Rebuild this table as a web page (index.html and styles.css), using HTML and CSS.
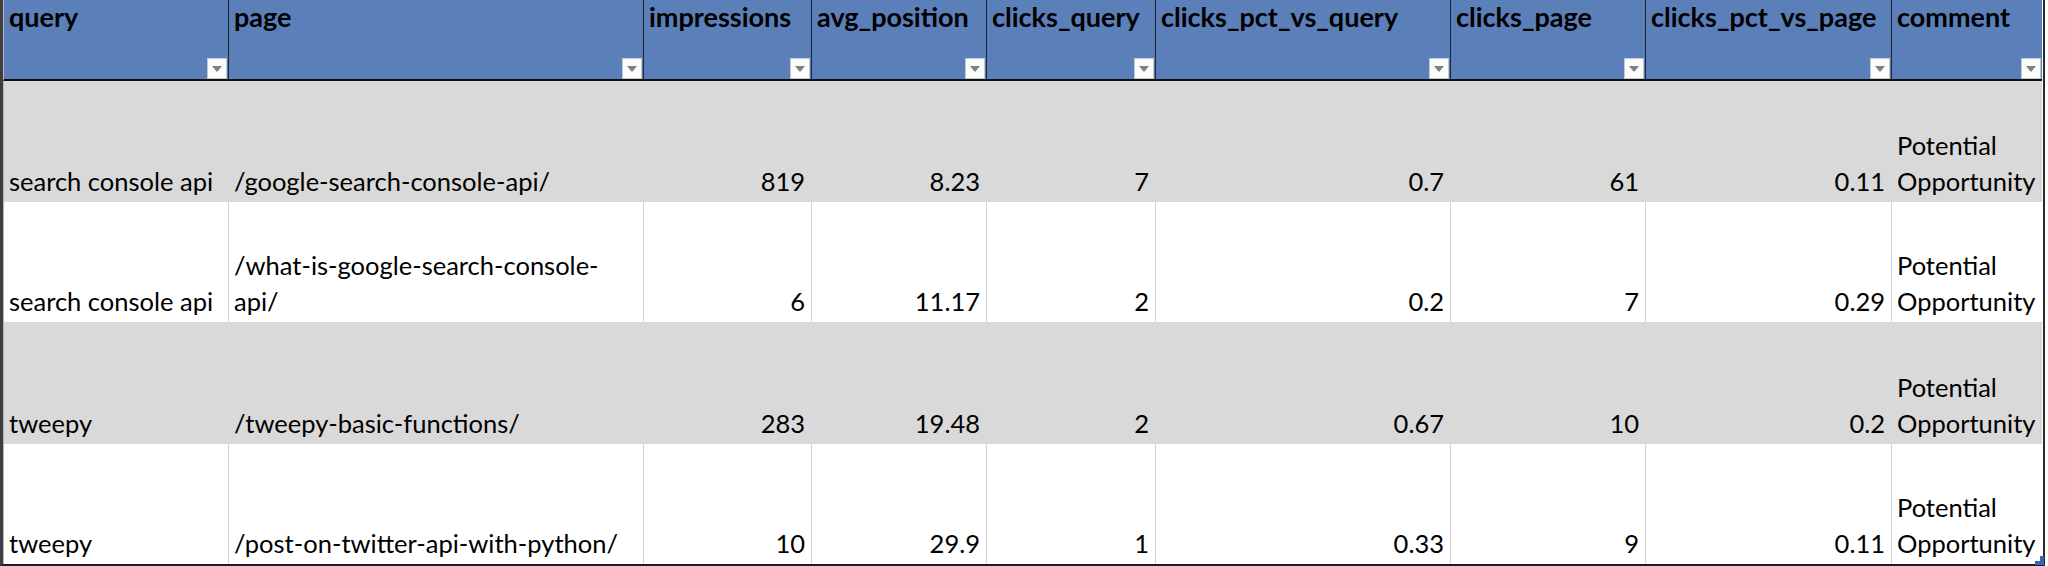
FILE: index.html
```html
<!DOCTYPE html>
<html lang="en">
<head>
<meta charset="utf-8">
<title>Query opportunities</title>
<link rel="stylesheet" href="styles.css">
</head>
<body>
<div class="sheet">
  <div class="grid">
    <div class="th first"><span class="label">query</span><span class="filter"><svg width="10" height="6" viewBox="0 0 10 6"><path d="M0 0H10L5 6Z"/></svg></span></div>
    <div class="th"><span class="label">page</span><span class="filter"><svg width="10" height="6" viewBox="0 0 10 6"><path d="M0 0H10L5 6Z"/></svg></span></div>
    <div class="th"><span class="label">impressions</span><span class="filter"><svg width="10" height="6" viewBox="0 0 10 6"><path d="M0 0H10L5 6Z"/></svg></span></div>
    <div class="th"><span class="label">avg_position</span><span class="filter"><svg width="10" height="6" viewBox="0 0 10 6"><path d="M0 0H10L5 6Z"/></svg></span></div>
    <div class="th"><span class="label">clicks_query</span><span class="filter"><svg width="10" height="6" viewBox="0 0 10 6"><path d="M0 0H10L5 6Z"/></svg></span></div>
    <div class="th"><span class="label">clicks_pct_vs_query</span><span class="filter"><svg width="10" height="6" viewBox="0 0 10 6"><path d="M0 0H10L5 6Z"/></svg></span></div>
    <div class="th"><span class="label">clicks_page</span><span class="filter"><svg width="10" height="6" viewBox="0 0 10 6"><path d="M0 0H10L5 6Z"/></svg></span></div>
    <div class="th"><span class="label">clicks_pct_vs_page</span><span class="filter"><svg width="10" height="6" viewBox="0 0 10 6"><path d="M0 0H10L5 6Z"/></svg></span></div>
    <div class="th last"><span class="label">comment</span><span class="filter"><svg width="10" height="6" viewBox="0 0 10 6"><path d="M0 0H10L5 6Z"/></svg></span></div>

    <div class="td shade first">search console api</div>
    <div class="td shade">/google-search-console-api/</div>
    <div class="td shade num">819</div>
    <div class="td shade num">8.23</div>
    <div class="td shade num">7</div>
    <div class="td shade num">0.7</div>
    <div class="td shade num">61</div>
    <div class="td shade num">0.11</div>
    <div class="td shade last">Potential Opportunity</div>

    <div class="td first">search console api</div>
    <div class="td">/what-is-google-search-console-<br>api/</div>
    <div class="td num">6</div>
    <div class="td num">11.17</div>
    <div class="td num">2</div>
    <div class="td num">0.2</div>
    <div class="td num">7</div>
    <div class="td num">0.29</div>
    <div class="td last">Potential Opportunity</div>

    <div class="td shade first">tweepy</div>
    <div class="td shade">/tweepy-basic-functions/</div>
    <div class="td shade num">283</div>
    <div class="td shade num">19.48</div>
    <div class="td shade num">2</div>
    <div class="td shade num">0.67</div>
    <div class="td shade num">10</div>
    <div class="td shade num">0.2</div>
    <div class="td shade last">Potential Opportunity</div>

    <div class="td first">tweepy</div>
    <div class="td">/post-on-twitter-api-with-python/</div>
    <div class="td num">10</div>
    <div class="td num">29.9</div>
    <div class="td num">1</div>
    <div class="td num">0.33</div>
    <div class="td num">9</div>
    <div class="td num">0.11</div>
    <div class="td last">Potential Opportunity</div>
  </div>
  <span class="resize"><svg width="9" height="9" viewBox="0 0 9 9"><path d="M9 0V9H0V5H5V0Z"/></svg></span>
</div>
</body>
</html>
```

FILE: styles.css
```css
* { box-sizing: border-box; }

html, body {
  margin: 0;
  padding: 0;
  background: #ffffff;
}

body {
  width: 2048px;
  height: 566px;
  overflow: hidden;
  font-family: Lato, "Liberation Sans", sans-serif;
  font-size: 27px;
  color: #000;
}

.sheet {
  position: relative;
  width: 2045px;
  height: 566px;
  border-left: 3px solid #3e3e3e;
  border-right: 2px solid #2a2a2a;
  border-bottom: 2px solid #1e1e1e;
}

.grid {
  display: grid;
  grid-template-columns: 226px 415px 168px 175px 169px 295px 195px 246px 150px;
  grid-template-rows: 81px 121px 120px 122px 120px;
}

.th {
  display: flex;
  flex-direction: column;
  justify-content: space-between;
  background: #5b7fb8;
  border-right: 1px solid #1b2230;
  border-bottom: 2px solid #111;
  font-weight: 700;
  line-height: 33px;
  padding: 0 0 0 5px;
  white-space: nowrap;
}

.th.last { border-right: none; }

.th.first, .td.first { border-left: 1px solid #b9b9b9; }

.filter {
  align-self: flex-end;
  width: 20px;
  height: 21px;
  margin-right: 1px;
  display: flex;
  align-items: center;
  justify-content: center;
  background: #fbfbfb;
  border: 1px solid #c2c8d2;
}

.filter svg { fill: #7f7f7f; display: block; }

.td {
  display: flex;
  flex-direction: column;
  justify-content: flex-end;
  background: #ffffff;
  border-right: 1px solid #d3d3d3;
  font-size: 25.5px;
  line-height: 36px;
  padding: 0 6px 3px 5px;
}

.td.shade {
  background: #d9d9d9;
  border-right-color: #d9d9d9;
}

.td.last { border-right: none; }

.td.num { text-align: right; }

.resize {
  position: absolute;
  right: -1px;
  bottom: -1px;
  width: 9px;
  height: 9px;
}

.resize svg { display: block; fill: #3f5fb3; }
```
